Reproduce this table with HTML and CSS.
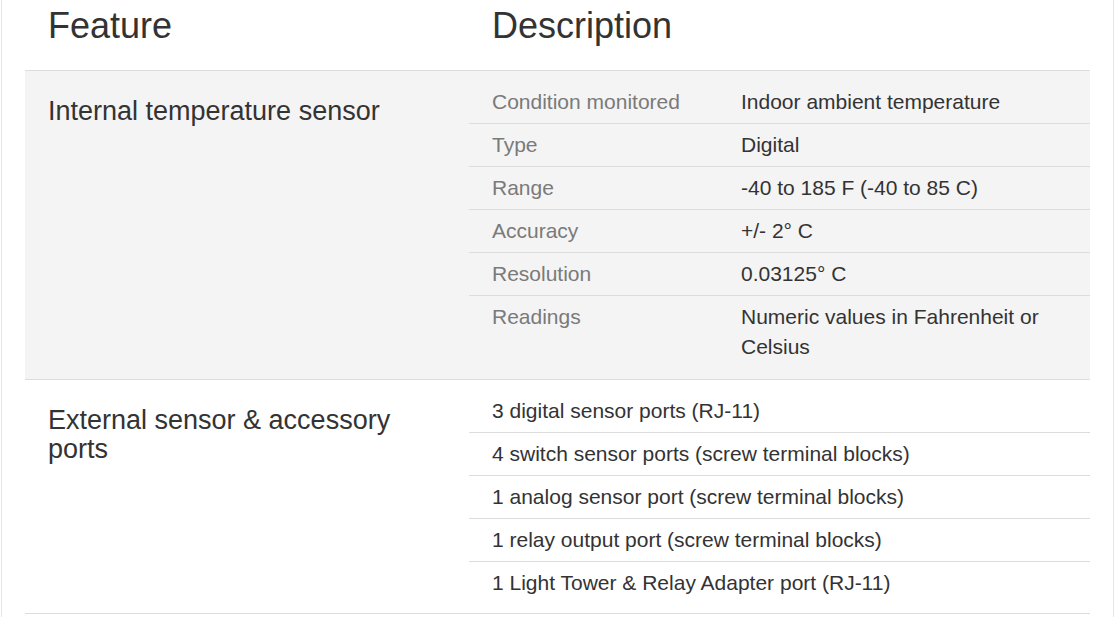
FILE: index.html
```html
<!DOCTYPE html>
<html>
<head>
<meta charset="utf-8">
<link rel="stylesheet" href="styles.css">
</head>
<body>
<div class="page">
  <table class="spec">
    <colgroup><col class="col-feature"><col class="col-desc"></colgroup>
    <thead>
      <tr>
        <th class="head-feature">Feature</th>
        <th class="head-desc">Description</th>
      </tr>
    </thead>
    <tbody>
      <tr class="row-shaded">
        <td class="feature">Internal temperature sensor</td>
        <td class="desc desc-first">
          <table class="sub">
            <colgroup><col class="sub-label-col"><col></colgroup>
            <tr><td class="label">Condition monitored</td><td class="value">Indoor ambient temperature</td></tr>
            <tr><td class="label">Type</td><td class="value">Digital</td></tr>
            <tr><td class="label">Range</td><td class="value">-40 to 185 F (-40 to 85 C)</td></tr>
            <tr><td class="label">Accuracy</td><td class="value">+/- 2° C</td></tr>
            <tr><td class="label">Resolution</td><td class="value">0.03125° C</td></tr>
            <tr><td class="label">Readings</td><td class="value">Numeric values in Fahrenheit or Celsius</td></tr>
          </table>
        </td>
      </tr>
      <tr>
        <td class="feature">External sensor &amp; accessory ports</td>
        <td class="desc desc-last">
          <table class="sub">
            <tr><td class="value">3 digital sensor ports (RJ-11)</td></tr>
            <tr><td class="value">4 switch sensor ports (screw terminal blocks)</td></tr>
            <tr><td class="value">1 analog sensor port (screw terminal blocks)</td></tr>
            <tr><td class="value">1 relay output port (screw terminal blocks)</td></tr>
            <tr><td class="value">1 Light Tower &amp; Relay Adapter port (RJ-11)</td></tr>
          </table>
        </td>
      </tr>
    </tbody>
  </table>
</div>
</body>
</html>
```

FILE: styles.css
```css
html, body {
  margin: 0;
  padding: 0;
  background: #ffffff;
}

body {
  font-family: "Liberation Sans", Arial, sans-serif;
  color: #333333;
}

.page {
  margin-left: 1px;
  width: 1064px;
  border-left: 1px solid #e6e6e6;
  border-right: 1px solid #e6e6e6;
  padding: 0 24px 10px 23px;
  min-height: 617px;
  box-sizing: content-box;
}

.spec {
  width: 1065px;
  border-collapse: collapse;
  table-layout: fixed;
}

.col-feature { width: 444px; }
.col-desc { width: 621px; }

.spec th {
  font-weight: normal;
  font-size: 36px;
  line-height: 1.1;
  text-align: left;
  padding: 6px 23px 24px 23px;
  color: #333333;
  border-bottom: 1px solid #dddddd;
}

.spec > tbody > tr {
  border-bottom: 1px solid #dddddd;
}

.row-shaded {
  background: #f4f4f4;
}

.feature {
  vertical-align: top;
  font-size: 27px;
  line-height: 1.1;
  padding: 26px 23px 10px 23px;
  color: #333333;
}

.desc {
  vertical-align: top;
  padding: 10px 0 10px 0;
}

.desc-first {
  padding-bottom: 11px;
}

.desc-last {
  padding-bottom: 9px;
}

.sub {
  width: 100%;
  border-collapse: collapse;
  table-layout: fixed;
}

.sub-label-col { width: 249px; }

.sub tr + tr td {
  border-top: 1px solid #dddddd;
}

.sub td {
  font-size: 21px;
  line-height: 30px;
  padding: 6px 23px;
  vertical-align: top;
}

.label {
  color: #7a7a7a;
}

.value {
  color: #333333;
}
```
